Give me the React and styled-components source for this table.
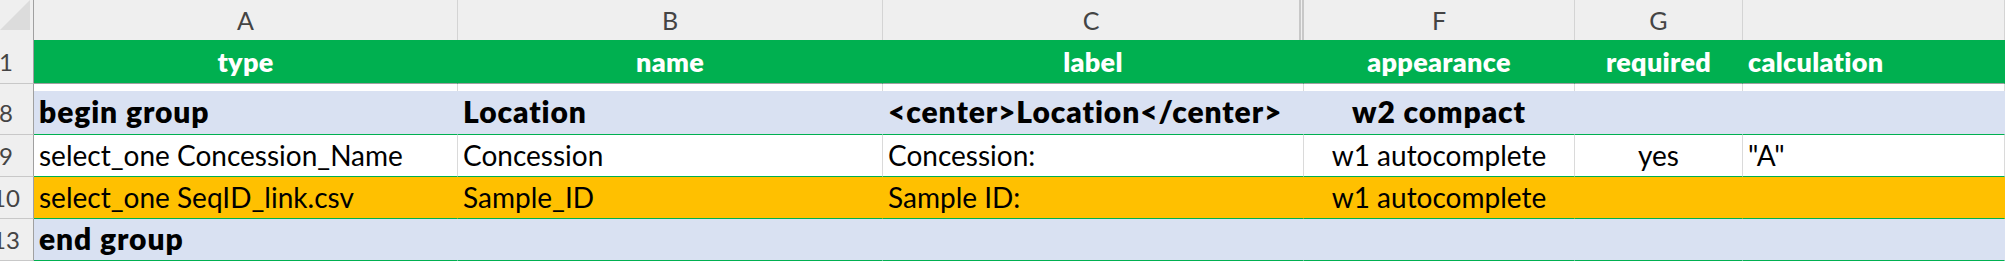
import React from 'react'
import styled, { createGlobalStyle } from 'styled-components'

const GREEN = '#00b050'
const LAVENDER = '#d9e1f2'
const ORANGE = '#ffc000'
const HEAD_BG = '#efefef'
const GRID = '#dadada'

const COLS = '34px 424px 425px 421px 271px 168px 1fr'

const GlobalStyle = createGlobalStyle`
  html, body {
    margin: 0;
    padding: 0;
    background: #fff;
  }
  body {
    font-family: Lato, "Liberation Sans", sans-serif;
    overflow: hidden;
  }
`

const Sheet = styled.div`
  width: 2005px;
  display: flex;
  flex-direction: column;
`

const Row = styled.div`
  display: grid;
  grid-template-columns: ${COLS};
  height: ${({ $h }) => $h}px;
`

const Corner = styled.div`
  background: ${HEAD_BG};
  border-right: 1px solid #a0a0a0;
  border-bottom: 1px solid #a0a0a0;
  display: flex;
  align-items: flex-end;
  padding-bottom: 4px;
  box-sizing: border-box;
`

const ColHead = styled.div`
  background: ${HEAD_BG};
  border-bottom: 1px solid #a0a0a0;
  border-right: ${({ $double }) => ($double ? `5px double #c8c8c8` : `1px solid #d4d4d4`)};
  color: #444;
  font-size: 25px;
  display: flex;
  align-items: center;
  justify-content: center;
  box-sizing: border-box;
`

const RowHead = styled.div`
  background: ${HEAD_BG};
  border-right: 1px solid #a0a0a0;
  border-bottom: 1px solid #c8c8c8;
  overflow: hidden;
  display: flex;
  align-items: center;
  box-sizing: border-box;
`

const RowNum = styled.span`
  flex: none;
  width: 52px;
  margin-left: -20px;
  text-align: center;
  color: #444;
  font-size: 24px;
  line-height: 1;
`

// sizes per text style: regular cells, bold group rows, bold header row
const fonts = {
  regular: { size: 28, weight: 400, spacing: 0 },
  group: { size: 30, weight: 800, spacing: 0.9 },
  head: { size: 27, weight: 800, spacing: 0.3 },
}

const Cell = styled.div`
  background: ${({ $bg }) => $bg || '#fff'};
  border-bottom: 1px solid ${({ $line }) => $line || GREEN};
  border-right: 1px solid ${({ $bg }) => (!$bg || $bg === '#fff' ? GRID : $bg)};
  color: ${({ $color }) => $color || '#000'};
  font-size: ${({ $font = 'regular' }) => fonts[$font].size}px;
  font-weight: ${({ $font = 'regular' }) => fonts[$font].weight};
  letter-spacing: ${({ $font = 'regular' }) => fonts[$font].spacing}px;
  line-height: 1;
  display: flex;
  align-items: flex-end;
  justify-content: ${({ $center }) => ($center ? 'center' : 'flex-start')};
  padding: 0 5px ${({ $pb }) => $pb ?? 7}px;
  box-sizing: border-box;
  white-space: nowrap;
  overflow: hidden;
`

const Triangle = () => (
  <svg width="33" height="36" viewBox="0 0 33 36">
    <polygon points="30,0 30,30 0,30" fill="#dcdcdc" />
  </svg>
)

const letters = ['A', 'B', 'C', 'F', 'G', '']

const headers = [
  { text: 'type', center: true },
  { text: 'name', center: true },
  { text: 'label', center: true },
  { text: 'appearance', center: true },
  { text: 'required', center: true },
  { text: 'calculation' },
]

const rows = [
  {
    num: '8',
    h: 44,
    bg: LAVENDER,
    font: 'group',
    pb: 8,
    cells: [
      { text: 'begin group' },
      { text: 'Location' },
      { text: '<center>Location</center>' },
      { text: 'w2 compact', center: true },
      { text: '' },
      { text: '' },
    ],
  },
  {
    num: '9',
    h: 42,
    cells: [
      { text: 'select_one Concession_Name' },
      { text: 'Concession' },
      { text: 'Concession:' },
      { text: 'w1 autocomplete', center: true },
      { text: 'yes', center: true },
      { text: '"A"' },
    ],
  },
  {
    num: '10',
    h: 42,
    bg: ORANGE,
    cells: [
      { text: 'select_one SeqID_link.csv' },
      { text: 'Sample_ID' },
      { text: 'Sample ID:' },
      { text: 'w1 autocomplete', center: true },
      { text: '' },
      { text: '' },
    ],
  },
  {
    num: '13',
    h: 42,
    bg: LAVENDER,
    font: 'group',
    cells: [
      { text: 'end group' },
      { text: '' },
      { text: '' },
      { text: '' },
      { text: '' },
      { text: '' },
    ],
  },
]

export default function App() {
  return (
    <Sheet>
      <GlobalStyle />
      <Row $h={40}>
        <Corner>
          <Triangle />
        </Corner>
        {letters.map((l, i) => (
          <ColHead key={i} $double={l === 'C'}>
            {l}
          </ColHead>
        ))}
      </Row>

      <Row $h={44}>
        <RowHead>
          <RowNum>1</RowNum>
        </RowHead>
        {headers.map((h, i) => (
          <Cell key={i} $bg={GREEN} $line="#a0a0a0" $color="#fff" $font="head" $center={h.center} $pb={8}>
            {h.text}
          </Cell>
        ))}
      </Row>

      <Row $h={7}>
        <RowHead />
        {headers.map((_, i) => (
          <Cell key={i} />
        ))}
      </Row>

      {rows.map((r) => (
        <Row key={r.num} $h={r.h}>
          <RowHead>
            <RowNum>{r.num}</RowNum>
          </RowHead>
          {r.cells.map((c, i) => (
            <Cell key={i} $bg={r.bg} $font={r.font} $center={c.center} $pb={r.pb}>
              {c.text}
            </Cell>
          ))}
        </Row>
      ))}
    </Sheet>
  )
}
